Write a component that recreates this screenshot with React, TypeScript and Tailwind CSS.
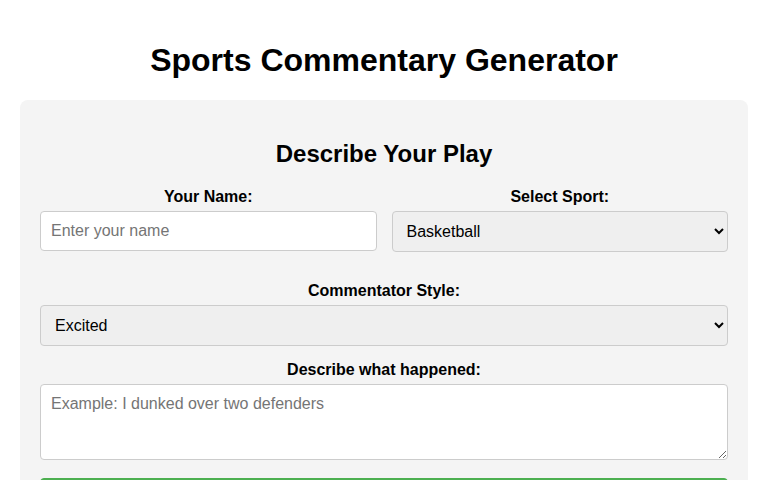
import React from "react";

const field =
  "block w-full rounded-[4px] border border-[#ccc] px-[10px] py-[10px] text-[16px] leading-[18px] text-left";

export default function App() {
  return (
    <div className="min-h-screen bg-white p-[20px] text-center text-black [font-family:'Liberation_Sans',Arial,sans-serif]">
      <h1 className="my-[21.5px] text-[32px] font-bold leading-[37px]">Sports Commentary Generator</h1>
      <div className="rounded-[8px] bg-[#f4f4f4] p-[20px]">
        <h2 className="my-[20px] text-[24px] font-bold leading-[28px]">Describe Your Play</h2>
        <div className="mb-[30px] flex gap-[15px]">
          <div className="flex-1">
            <label className="mb-[5px] block font-bold leading-[18px]">Your Name:</label>
            <input
              type="text"
              placeholder="Enter your name"
              className={field + " bg-white placeholder:text-[#757575]"}
            />
          </div>
          <div className="flex-1">
            <label className="mb-[5px] block font-bold leading-[18px]">Select Sport:</label>
            <select defaultValue="Basketball" className={field + " h-[41px] bg-[#efefef] py-0"}>
              <option>Basketball</option>
              <option>Football</option>
              <option>Soccer</option>
              <option>Baseball</option>
            </select>
          </div>
        </div>
        <div className="mb-[15px]">
          <label className="mb-[5px] block font-bold leading-[18px]">Commentator Style:</label>
          <select defaultValue="Excited" className={field + " h-[41px] bg-[#efefef] py-0"}>
            <option>Excited</option>
            <option>Calm</option>
            <option>Funny</option>
          </select>
        </div>
        <div className="mb-[18px]">
          <label className="mb-[5px] block font-bold leading-[18px]">Describe what happened:</label>
          <textarea
            rows={3}
            placeholder="Example: I dunked over two defenders"
            className={field + " h-[76px] bg-white placeholder:text-[#757575]"}
          />
        </div>
        <button className="block w-full rounded-[4px] border border-[#4caf50] bg-[#4caf50] py-[12px] text-[18px] font-bold text-white">
          Generate Commentary
        </button>
      </div>
    </div>
  );
}
